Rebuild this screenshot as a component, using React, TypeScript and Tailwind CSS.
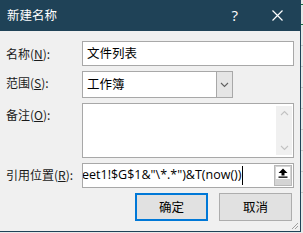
import React from 'react';

const ui = { fontFamily: '"Noto Sans CJK SC", "Noto Sans", sans-serif' };
const latin = { fontFamily: '"Open Sans", "Noto Sans CJK SC", sans-serif' };

function Label({ text, hot }: { text: string; hot: string }) {
  return (
    <div className="w-[82px] shrink-0 pl-[6px] text-[12px] leading-[14px] text-[#1a1a1a]" style={ui}>
      {text}(<u>{hot}</u>):
    </div>
  );
}

function Chevron({ up, color }: { up?: boolean; color: string }) {
  return (
    <svg width="9" height="6" viewBox="0 0 9 6">
      <path d={up ? 'M1 5 L4.5 1.5 L8 5' : 'M1 1 L4.5 4.5 L8 1'} fill="none" stroke={color} strokeWidth="1.1" />
    </svg>
  );
}

export default function App() {
  return (
    <div className="flex h-[233px] w-[303px] overflow-hidden bg-[#e8e8e8]">
      <div className="flex h-[232px] w-[301px] shrink-0 flex-col border-b border-r border-[#1f4257] bg-[#f0f0f0]">
        {/* title bar */}
        <div className="flex h-[31px] shrink-0 items-center bg-[#1f4257] pl-[7px] text-white">
          <span className="text-[12.5px]" style={ui}>新建名称</span>
          <span className="ml-auto mr-[34px] text-[15px]" style={latin}>?</span>
          <svg width="11" height="11" viewBox="0 0 11 11" className="mr-[17px]">
            <path d="M0.5 0.5 L10.5 10.5 M10.5 0.5 L0.5 10.5" stroke="white" strokeWidth="1.2" />
          </svg>
        </div>

        <div className="flex flex-col gap-[5px] pt-[10px]">
          {/* name */}
          <div className="flex items-start">
            <div className="pt-[6px]"><Label text="名称" hot="N" /></div>
            <div className="flex h-[25px] w-[212px] items-center border border-[#a8a8a8] bg-white pl-[4px] text-[12.5px] text-black" style={ui}>
              文件列表
            </div>
          </div>

          {/* scope */}
          <div className="flex items-start">
            <div className="pt-[5px]"><Label text="范围" hot="S" /></div>
            <div className="flex h-[27px] w-[151px] border border-[#a8a8a8] bg-white">
              <div className="flex flex-1 items-center pl-[4px] text-[12.5px] text-black" style={ui}>工作簿</div>
              <div className="flex w-[16px] items-center justify-center border-l border-[#a8a8a8] bg-[#e5e5e5]">
                <Chevron color="#606060" />
              </div>
            </div>
          </div>

          {/* comment */}
          <div className="flex items-start">
            <div className="pt-[5px]"><Label text="备注" hot="O" /></div>
            <div className="flex h-[55px] w-[212px] justify-end border border-[#a8a8a8] bg-white p-[2px] pr-[1px]">
              <div className="flex w-[16px] flex-col items-center justify-between bg-[#f0f0f0] py-[4px]">
                <Chevron up color="#c2c2c2" />
                <Chevron color="#c2c2c2" />
              </div>
            </div>
          </div>

          {/* refers to */}
          <div className="flex items-start">
            <div className="pt-[5px]"><Label text="引用位置" hot="R" /></div>
            <div className="flex h-[25px] w-[212px] border border-[#a8a8a8] bg-white">
              <div className="flex flex-1 items-center overflow-hidden pl-[1px] text-[12.5px] text-black" style={latin}>
                <span className="-ml-[2px] whitespace-pre">eet1!$G$1&amp;"\*.*")&amp;T(now())</span>
                <span className="ml-[1px] h-[19px] w-[1px] bg-black" />
              </div>
              <div className="my-[1px] mr-[1px] flex w-[18px] flex-col border border-[#b9b9b9] bg-[#d4d4d4] p-[1px]">
                <div className="flex h-[12px] items-center justify-center bg-white">
                  <svg width="10" height="10" viewBox="0 0 10 10">
                    <path d="M5 0.5 L9.5 5 L6.5 5 L6.5 7.5 L3.5 7.5 L3.5 5 L0.5 5 Z" fill="black" />
                    <rect x="0.5" y="8.5" width="9" height="1.3" fill="black" />
                  </svg>
                </div>
              </div>
            </div>
          </div>

          {/* buttons */}
          <div className="flex pl-[135px]">
            <button className="h-[28px] w-[73px] border-2 border-[#0078d7] bg-[#e1e1e1] text-[12.5px] text-black" style={ui}>
              确定
            </button>
            <button className="ml-[11px] h-[28px] w-[73px] border border-[#adadad] bg-[#e1e1e1] text-[12.5px] text-black" style={ui}>
              取消
            </button>
          </div>
        </div>

        <div className="mt-auto flex justify-end pb-[1px] pr-[1px]">
          <svg width="8" height="8" viewBox="0 0 8 8">
            <path d="M7 1 L1 7 M7 4 L4 7 M7 7 L7 7" stroke="#a0a0a0" strokeWidth="1" />
          </svg>
        </div>
      </div>

      {/* sheet behind */}
      <div className="flex flex-1 flex-col">
        <div className="mt-[4px] h-[1px] bg-[#217346]" />
        <div className="mt-[19px] h-[1px] bg-[#217346]" />
        <div className="mt-[20px] h-[1px] bg-[#c8c8c8]" />
        <div className="mt-[20px] h-[1px] bg-[#c8c8c8]" />
        <div className="mt-[20px] h-[1px] bg-[#c8c8c8]" />
        <div className="mt-[20px] h-[1px] bg-[#c8c8c8]" />
        <div className="mt-[20px] h-[1px] bg-[#c8c8c8]" />
        <div className="mt-[20px] h-[1px] bg-[#c8c8c8]" />
        <div className="mt-[20px] h-[1px] bg-[#c8c8c8]" />
        <div className="mt-[20px] h-[1px] bg-[#c8c8c8]" />
      </div>
    </div>
  );
}
